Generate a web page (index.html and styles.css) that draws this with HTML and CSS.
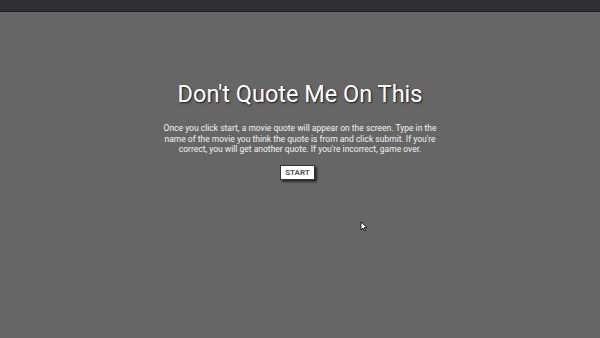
FILE: index.html
```html
<!DOCTYPE html>
<html lang="en">
<head>
    <meta charset="UTF-8">
    <meta name="viewport" content="width=device-width, initial-scale=1.0">
    <title>Don't Quote Me On This</title>
    <link rel="stylesheet" href="styles.css">
</head>
<body>
    <div class="topbar"></div>
    <div class="container">
        <div class="intro">
            <h1 class="title">Don't Quote Me On This</h1>
            <p class="rules">Once you click start, a movie quote will appear on the screen. Type in the name of the movie you think the quote is from and click submit. If you're correct, you will get another quote. If you're incorrect, game over.</p>
            <button class="start-btn">START</button>
        </div>
    </div>
    <svg class="cursor" width="8" height="12" viewBox="0 0 8 12">
        <path d="M1 1 L1 9 L3 7 L4.5 10 L5.5 9.5 L4.2 6.6 L7 6.6 Z" fill="#fff" stroke="#000" stroke-width="0.8"/>
    </svg>
</body>
</html>
```

FILE: styles.css
```css
body, html {
    margin: 0;
    padding: 0;
    height: 100%;
    overflow: hidden;
    font-family: Roboto, "Liberation Sans", sans-serif;
    background: #666666;
}
.topbar {
    height: 11px;
    background: #302f31;
    border-bottom: 1px solid #1e1e1f;
}
.container {
    display: flex;
    justify-content: center;
}
.intro {
    width: 274px;
    text-align: center;
    padding-top: 67px;
}
.title {
    margin: 0 -40px;
    color: #fff;
    font-size: 23.5px;
    font-weight: 400;
    line-height: 30px;
    text-shadow: 1px 1px 2px rgba(0, 0, 0, 0.75);
    white-space: nowrap;
}
.rules {
    margin: 14px 0 0;
    color: #f2f2f2;
    font-size: 8.5px;
    line-height: 10.5px;
}
.start-btn {
    margin: 10px 5px 0 0;
    background: #fff;
    color: #555;
    border: 1px solid #333;
    font-family: Roboto, "Liberation Sans", sans-serif;
    font-size: 8px;
    font-weight: 700;
    padding: 2px 4px;
    line-height: 9px;
    box-shadow: 2px 2px 2px rgba(0, 0, 0, 0.6);
    cursor: pointer;
}
.cursor {
    position: absolute;
    left: 360px;
    top: 221px;
}
```
